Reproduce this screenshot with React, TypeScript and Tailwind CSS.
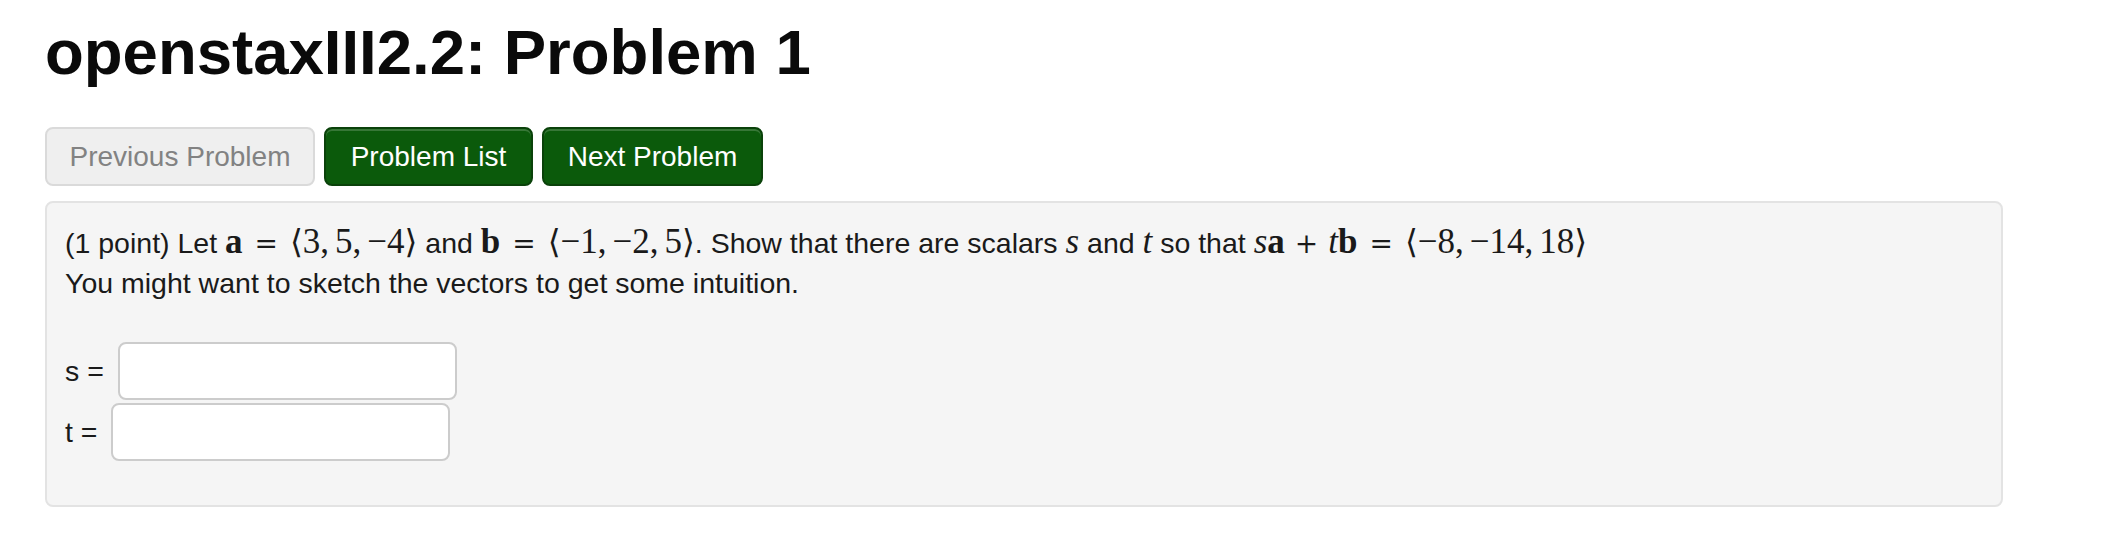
import React from 'react';

// Inline math pieces, set in a serif face like MathJax output
const M = ({ children, className = '' }: { children: React.ReactNode; className?: string }) => (
  <span className={`font-['Liberation_Serif','DejaVu_Serif',serif] text-[35px] leading-none ${className}`}>{children}</span>
);

const Bold = ({ children }: { children: React.ReactNode }) => <M className="font-bold">{children}</M>;
const It = ({ children }: { children: React.ReactNode }) => <M className="italic">{children}</M>;

// Relations and operators use a wider glyph, like the TeX fonts
const Rel = ({ children }: { children: React.ReactNode }) => (
  <span className="mx-[12px] font-['DejaVu_Serif',serif] text-[28px] leading-none font-light">{children}</span>
);
const Op = ({ children }: { children: React.ReactNode }) => (
  <span className="mx-[10px] font-['DejaVu_Serif',serif] text-[28px] leading-none font-light">{children}</span>
);

const Vec = ({ parts }: { parts: string[] }) => (
  <M>
    <span className="font-['DejaVu_Serif',serif] text-[33px] font-light">⟨</span>
    {parts.map((p, i) => (
      <React.Fragment key={i}>
        {p}
        {i < parts.length - 1 && <span className="mr-[0.17em]">,</span>}
      </React.Fragment>
    ))}
    <span className="font-['DejaVu_Serif',serif] text-[33px] font-light">⟩</span>
  </M>
);

function NavButton({ label, width, disabled }: { label: string; width: string; disabled?: boolean }) {
  return (
    <button
      className={
        disabled
          ? `${width} h-[59px] rounded-[8px] border-2 border-[#dadada] bg-[#efefef] text-[28px] text-[#828282]`
          : `${width} h-[59px] rounded-[8px] border-2 border-[#0a420a] bg-[#0b5a0b] text-[28px] text-white shadow-[inset_0_2px_0_rgba(255,255,255,0.18)]`
      }
    >
      {label}
    </button>
  );
}

function AnswerRow({ name, className = '' }: { name: string; className?: string }) {
  return (
    <div className={`flex items-center gap-[14px] ${className}`}>
      <span>{name} =</span>
      <input
        type="text"
        aria-label={name}
        className="w-[339px] h-[58px] rounded-[8px] border-2 border-[#cccccc] bg-white outline-none"
      />
    </div>
  );
}

export default function App() {
  return (
    <div className="min-h-[556px] bg-white pl-[45px] pr-[111px] font-['Liberation_Sans',Arial,sans-serif] text-[#1a1a1a]">
      <h1 className="pt-[21px] text-[63.5px] leading-[62px] font-bold text-[#0a0a0a]">
        openstaxIII2.2: Problem 1
      </h1>

      <div className="mt-[44px] flex gap-[9px]">
        <NavButton label="Previous Problem" width="w-[270px]" disabled />
        <NavButton label="Problem List" width="w-[209px]" />
        <NavButton label="Next Problem" width="w-[221px]" />
      </div>

      <div className="mt-[15px] rounded-[8px] border-2 border-[#e3e3e3] bg-[#f5f5f5] pl-[18px] pt-[20px] pb-[44px] text-[28.5px] leading-[40px]">
        <div>
          (1 point) Let <Bold>a</Bold>
          <Rel>=</Rel>
          <Vec parts={['3', '5', '−4']} /> and <Bold>b</Bold>
          <Rel>=</Rel>
          <Vec parts={['−1', '−2', '5']} />. Show that there are scalars <It>s</It> and <It>t</It> so that{' '}
          <It>s</It>
          <Bold>a</Bold>
          <Op>+</Op>
          <It>t</It>
          <Bold>b</Bold>
          <Rel>=</Rel>
          <Vec parts={['−8', '−14', '18']} />
        </div>
        <div>You might want to sketch the vectors to get some intuition.</div>

        <AnswerRow name="s" className="mt-[39px]" />
        <AnswerRow name="t" className="mt-[3px]" />
      </div>
    </div>
  );
}
